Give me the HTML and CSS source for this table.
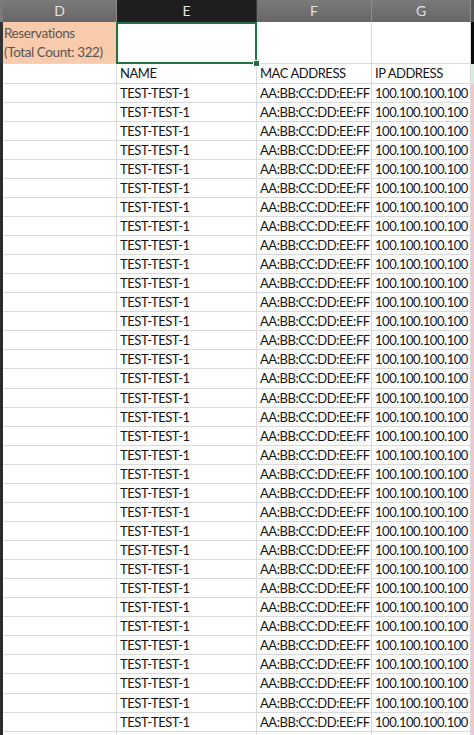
FILE: index.html
```html
<!DOCTYPE html>
<html>
<head>
<meta charset="utf-8">
<link rel="stylesheet" href="styles.css">
</head>
<body>
<div class="sheet">
  <div class="row hdr">
    <div class="c strip"></div>
    <div class="c">D</div>
    <div class="c hsel">E</div>
    <div class="c">F</div>
    <div class="c">G</div>
    <div class="c edge"></div>
  </div>
  <div class="row r1">
    <div class="c strip"></div>
    <div class="c title">Reservations<br>(Total Count: 322)</div>
    <div class="c selcell"><span class="selbox"></span><span class="handle"></span></div>
    <div class="c"></div>
    <div class="c"></div>
    <div class="c edge"></div>
  </div>
  <div class="row colhead">
    <div class="c strip"></div>
    <div class="c"></div>
    <div class="c">NAME</div>
    <div class="c">MAC ADDRESS</div>
    <div class="c">IP ADDRESS</div>
    <div class="c edge"></div>
  </div>
  <div id="rows"></div>
</div>
<script>
  var host = document.getElementById('rows');
  var html = '';
  for (var i = 0; i < 35; i++) {
    var cls = (i === 15 || i === 31) ? 'row data tall' : 'row data';
    html += '<div class="' + cls + '"><div class="c strip"></div><div class="c"></div><div class="c">TEST-TEST-1</div><div class="c">AA:BB:CC:DD:EE:FF</div><div class="c">100.100.100.100</div><div class="c edge"></div></div>';
  }
  host.innerHTML = html;
</script>
</body>
</html>
```

FILE: styles.css
```css
html, body {
  margin: 0;
  padding: 0;
  background: #ffffff;
  overflow: hidden;
}

.sheet {
  width: 474px;
  font-family: "Lato", "Liberation Sans", sans-serif;
  font-size: 13px;
  letter-spacing: -0.45px;
  color: #141414;
}

.row {
  display: grid;
  grid-template-columns: 3px 114px 140px 115px 99px 3px;
}

.c {
  box-sizing: border-box;
  border-right: 1px solid #dadada;
  border-bottom: 1px solid #dadada;
  padding-left: 3px;
  white-space: nowrap;
  overflow: hidden;
}

.strip {
  border: none;
  padding: 0;
  background: #2b2b2b;
}

.edge {
  border: none;
  padding: 0;
}

/* column header bar */
.hdr {
  height: 22px;
}
.hdr .c {
  background: linear-gradient(#7a7a7a, #666666);
  border-right: 1px solid #8c8c8c;
  border-bottom: none;
  color: #e2e2e2;
  text-align: center;
  line-height: 22px;
  padding: 0;
  font-size: 14px;
  letter-spacing: 0;
}
.hdr .strip {
  background: #7a7a7a;
  border: none;
}
.hdr .hsel {
  background: #1e1e1e;
  color: #e6e6e6;
  border-right: 1px solid #3a3a3a;
}
.hdr .edge {
  background: #555555;
  border: none;
}

/* first row with title */
.r1 {
  height: 42px;
}
.r1 .strip {
  background: #333333;
}
.r1 .title {
  background: #f8cbad;
  color: #5a5552;
  font-size: 13.5px;
  letter-spacing: -0.4px;
  line-height: 19px;
  padding-left: 1px;
  padding-top: 2px;
}
.r1 .edge {
  background: #0a0a0a;
}

.selcell {
  position: relative;
  overflow: visible;
}
.selbox {
  position: absolute;
  left: -1px;
  top: 0;
  right: -1px;
  bottom: -1px;
  border: 2px solid #217346;
}
.handle {
  position: absolute;
  right: -3px;
  bottom: -3px;
  width: 5px;
  height: 5px;
  background: #217346;
  box-shadow: 0 0 0 1px #ffffff;
  z-index: 2;
}

/* header labels and data rows */
.colhead {
  height: 20px;
}
.colhead .c {
  line-height: 19px;
}
.data {
  height: 19px;
}
.data.tall {
  height: 20px;
}
.data .c {
  line-height: 18px;
}
.colhead .edge {
  background: #d3edd7;
}
.data .edge {
  background: #f3c6cf;
}
```
